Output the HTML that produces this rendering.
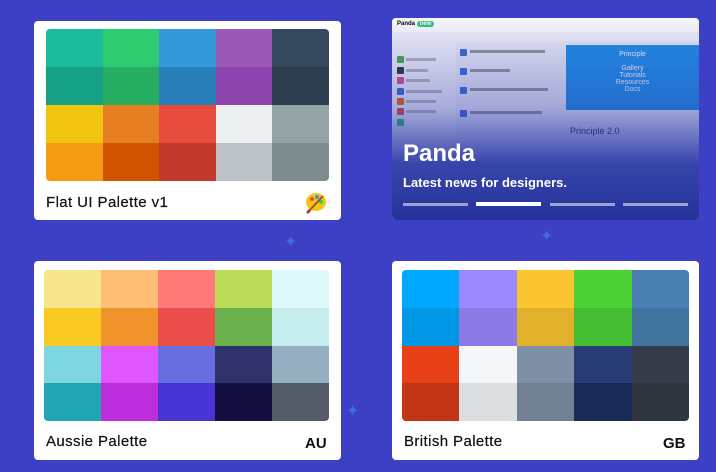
<!DOCTYPE html>
<html><head><meta charset="utf-8"><style>
*{margin:0;padding:0;box-sizing:border-box}
body{width:716px;height:472px;background:#3d3fc4;position:relative;overflow:hidden;font-family:"Liberation Sans",sans-serif}
.card{position:absolute;background:#fff;border-radius:4px}
.grid{position:absolute;display:grid;grid-template-columns:repeat(5,1fr);grid-template-rows:repeat(4,1fr);border-radius:4px;overflow:hidden}
.t{position:absolute;font-size:15px;color:#111;letter-spacing:0.4px;-webkit-text-stroke:0.2px #111}
.cc{position:absolute;font-size:15px;font-weight:bold;color:#111}
.sp{position:absolute;color:#3b6fd9;font-size:16px}
.li{position:absolute;height:3px;background:#8a93c8}
.ic{position:absolute;width:7px;height:7px;border-radius:1px}
</style></head><body>
<div class="card" style="left:34px;top:21px;width:307px;height:199px">
<div class="grid" style="left:12px;top:8px;width:283px;height:152px">
<i style="background:#1abc9c"></i><i style="background:#2ecc71"></i><i style="background:#3498db"></i><i style="background:#9b59b6"></i><i style="background:#34495e"></i>
<i style="background:#16a085"></i><i style="background:#27ae60"></i><i style="background:#2980b9"></i><i style="background:#8e44ad"></i><i style="background:#2c3e50"></i>
<i style="background:#f1c40f"></i><i style="background:#e67e22"></i><i style="background:#e74c3c"></i><i style="background:#ecf0f1"></i><i style="background:#95a5a6"></i>
<i style="background:#f39c12"></i><i style="background:#d35400"></i><i style="background:#c0392b"></i><i style="background:#bdc3c7"></i><i style="background:#7f8c8d"></i>
</div>
<div class="t" style="left:12px;top:173px">Flat UI Palette v1</div>
<svg style="position:absolute;left:271px;top:171px" width="22" height="22" viewBox="0 0 22 22"><ellipse cx="11" cy="10" rx="10" ry="9" fill="#f5c518"/><circle cx="7" cy="7" r="2" fill="#e74c3c"/><circle cx="12" cy="5" r="2" fill="#3498db"/><circle cx="16" cy="10" r="2" fill="#2ecc71"/><line x1="18" y1="4" x2="4" y2="19" stroke="#a0522d" stroke-width="2"/><line x1="5" y1="18" x2="2" y2="21" stroke="#c0392b" stroke-width="3"/></svg>
</div>
<div class="card" style="left:392px;top:18px;width:307px;height:202px;overflow:hidden;background:#eef0f6">
<div style="position:absolute;left:0;top:0;width:307px;height:14px;background:#fff;font-size:6px;padding:3px 5px;font-weight:bold">Panda <span style="background:#2ecc71;color:#fff;border-radius:3px;padding:0 3px">new</span></div>
<div style="position:absolute;left:0;top:14px;width:307px;height:10px;background:#f5f6fa"></div>
<div style="position:absolute;left:0;top:24px;width:64px;height:178px;background:#f7f8fb"></div>
<div class="ic" style="left:5px;top:38px;background:#4caf50"></div>
<div class="ic" style="left:5px;top:49px;background:#333"></div>
<div class="ic" style="left:5px;top:59px;background:#ea4c89"></div>
<div class="ic" style="left:5px;top:70px;background:#3b6fd9"></div>
<div class="ic" style="left:5px;top:80px;background:#ff6600"></div>
<div class="ic" style="left:5px;top:90px;background:#da552f"></div>
<div class="ic" style="left:5px;top:101px;background:#2ecc71"></div>
<div class="li" style="left:14px;top:40px;width:30px;background:#bbb"></div>
<div class="li" style="left:14px;top:51px;width:22px;background:#bbb"></div>
<div class="li" style="left:14px;top:61px;width:24px;background:#bbb"></div>
<div class="li" style="left:14px;top:72px;width:36px;background:#bbb"></div>
<div class="li" style="left:14px;top:82px;width:30px;background:#bbb"></div>
<div class="li" style="left:14px;top:92px;width:30px;background:#bbb"></div>
<div class="ic" style="left:68px;top:31px;background:#3b6fd9"></div><div class="li" style="left:78px;top:32px;width:75px;background:#999"></div>
<div class="ic" style="left:68px;top:50px;background:#3b6fd9"></div><div class="li" style="left:78px;top:51px;width:40px;background:#999"></div>
<div class="ic" style="left:68px;top:69px;background:#3b6fd9"></div><div class="li" style="left:78px;top:70px;width:78px;background:#999"></div>
<div class="ic" style="left:68px;top:92px;background:#3b6fd9"></div><div class="li" style="left:78px;top:93px;width:72px;background:#999"></div>
<div style="position:absolute;left:174px;top:27px;width:133px;height:65px;background:#1e90e6;color:#fff;text-align:center;font-size:7px;padding-top:6px;line-height:7px">Principle<br><br>Gallery<br>Tutorials<br>Resources<br>Docs</div>
<div style="position:absolute;left:178px;top:108px;font-size:9px;color:#333">Principle 2.0</div>
<div style="position:absolute;left:0;top:0;width:307px;height:202px;background:linear-gradient(180deg,rgba(60,65,190,0.05) 0%,rgba(45,55,170,0.4) 45%,rgba(30,45,160,0.88) 72%,rgba(25,40,150,0.95) 100%)"></div>
<div style="position:absolute;left:11px;top:122px;color:#fff;font-size:24px;font-weight:bold">Panda</div>
<div style="position:absolute;left:11px;top:157px;color:#fff;font-size:13px;font-weight:bold">Latest news for designers.</div>
<div style="position:absolute;left:11px;top:185px;width:65px;height:3px;background:#9aa3cf"></div>
<div style="position:absolute;left:84px;top:184px;width:65px;height:4px;background:#fff"></div>
<div style="position:absolute;left:158px;top:185px;width:65px;height:3px;background:#9aa3cf"></div>
<div style="position:absolute;left:231px;top:185px;width:65px;height:3px;background:#9aa3cf"></div>
</div>
<div class="sp" style="left:284px;top:232px">✦</div>
<div class="sp" style="left:540px;top:226px">✦</div>
<div class="sp" style="left:346px;top:401px">✦</div>
<div class="card" style="left:34px;top:261px;width:307px;height:199px">
<div class="grid" style="left:10px;top:9px;width:285px;height:151px">
<i style="background:#f6e58d"></i><i style="background:#ffbe76"></i><i style="background:#ff7979"></i><i style="background:#badc58"></i><i style="background:#dff9fb"></i>
<i style="background:#f9ca24"></i><i style="background:#f0932b"></i><i style="background:#eb4d4b"></i><i style="background:#6ab04c"></i><i style="background:#c7ecee"></i>
<i style="background:#7ed6df"></i><i style="background:#e056fd"></i><i style="background:#686de0"></i><i style="background:#30336b"></i><i style="background:#95afc0"></i>
<i style="background:#22a6b3"></i><i style="background:#be2edd"></i><i style="background:#4834d4"></i><i style="background:#130f40"></i><i style="background:#535c68"></i>
</div>
<div class="t" style="left:12px;top:172px">Aussie Palette</div>
<div class="cc" style="left:271px;top:174px">AU</div>
</div>
<div class="card" style="left:392px;top:261px;width:307px;height:199px">
<div class="grid" style="left:10px;top:9px;width:287px;height:151px">
<i style="background:#00a8ff"></i><i style="background:#9c88ff"></i><i style="background:#fbc531"></i><i style="background:#4cd137"></i><i style="background:#487eb0"></i>
<i style="background:#0097e6"></i><i style="background:#8c7ae6"></i><i style="background:#e1b12c"></i><i style="background:#44bd32"></i><i style="background:#40739e"></i>
<i style="background:#e84118"></i><i style="background:#f5f6fa"></i><i style="background:#7f8fa6"></i><i style="background:#273c75"></i><i style="background:#353b48"></i>
<i style="background:#c23616"></i><i style="background:#dcdde1"></i><i style="background:#718093"></i><i style="background:#192a56"></i><i style="background:#2f3640"></i>
</div>
<div class="t" style="left:12px;top:172px">British Palette</div>
<div class="cc" style="left:271px;top:174px">GB</div>
</div>
</body></html>
